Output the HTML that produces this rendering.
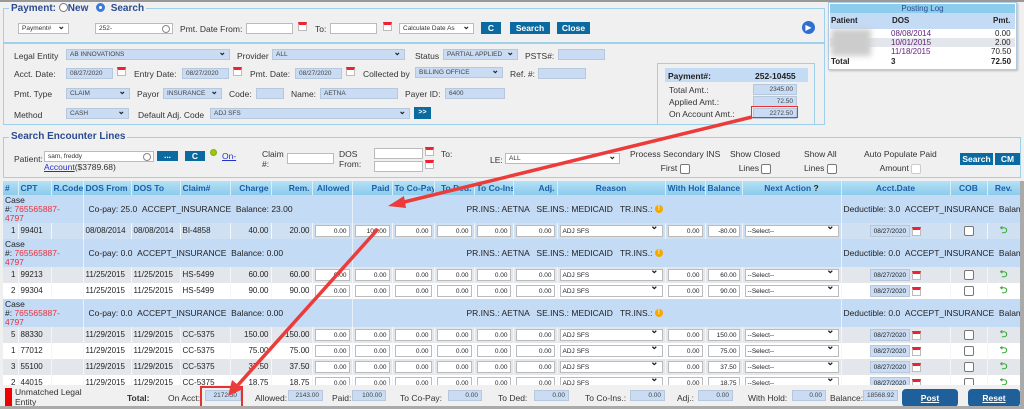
<!DOCTYPE html>
<html><head><meta charset="utf-8"><style>
*{box-sizing:border-box;margin:0;padding:0}
body{width:1024px;height:409px;overflow:hidden;background:#f0f0f0;font-family:"Liberation Sans",Arial,sans-serif;font-size:8px;color:#333;position:relative}
.a{position:absolute;white-space:nowrap}
.lb{font-size:8.5px;color:#333}
.in{position:absolute;background:#c9dcf3;border:1px solid #b8c8dc;height:11px;font-size:6.5px;padding:1px 3px;color:#444;white-space:nowrap}
.wi{position:absolute;background:#fff;border:1px solid #bbb;height:11px;font-size:6.5px;padding:1px 3px;white-space:nowrap}
.sel::after{content:"⌄";position:absolute;right:3px;top:-3px;font-size:9px;color:#222;font-weight:bold}
.btn{position:absolute;background:#0b6aa0;color:#fff;font-weight:bold;font-size:8.5px;text-align:center;height:12px;line-height:12px}
.cal{position:absolute;width:9px;height:9px;background:#fff;border:1px solid #bbb;border-top:3px solid #e23}
.leg{position:absolute;color:#2b4b90;font-weight:bold;font-size:10px;background:#f0f0f0;padding:0 2px}
.fs{position:absolute;border:1px solid #9fd0ea}
table{border-collapse:collapse;table-layout:fixed;width:1017px}
td{font-size:8px;white-space:nowrap;padding:0 2px;border-right:1px solid #f4f6f9;overflow:hidden;color:#222}
th{font-size:8.5px;color:#1a5fa8;background:linear-gradient(#b5e0f5,#8ccbec);height:14px;border-right:1px solid #d8eef9;text-align:right;padding:0 2px;white-space:nowrap;overflow:hidden}
.r{text-align:right}
.c{text-align:center}
.case td{background:#c4dbf6;height:28px;font-size:8.5px;border-right:1px solid #e8f0fa;line-height:9px}
.cn{color:#e8303a}
.ti{display:block;background:#fff;border:1px solid #bbb;height:12px;font-size:6.5px;text-align:right;padding:1px 2px}
.ts{display:block;background:#fff;border:1px solid #bbb;height:12px;font-size:6.5px;padding:1px 2px;position:relative}
.ts::after{content:"⌄";position:absolute;right:3px;top:-4px;font-size:10px;font-weight:bold}
.dt{display:inline-block;background:#c9dcf3;border:1px solid #b8c8dc;height:12px;font-size:6.5px;padding:1px 2px;width:40px;vertical-align:middle}
.ck{display:inline-block;width:10px;height:10px;border:1px solid #777;border-radius:2px;background:#fff;vertical-align:middle}
.rv{color:#3cac3c;font-weight:bold;font-size:10px;line-height:10px}
.dr td{height:16px;line-height:10px}
.g td{background:#e3e6ea}
.w td{background:#fff}
.b td{background:#cfe0f3}
.ex{display:inline-block;width:8px;height:8px;border-radius:50%;background:#f5a800;color:#fff;font-size:6px;text-align:center;line-height:8px;font-weight:bold;vertical-align:middle}
.tc{display:inline-block;width:9px;height:9px;background:#fff;border:1px solid #bbb;border-top:3px solid #e23;vertical-align:middle}
</style></head><body>
<div class="a" style="left:0;top:0;width:1024px;height:2px;background:#999"></div>
<div class="fs" style="left:3px;top:8px;width:822px;height:35px"></div>
<div class="leg" style="left:9px;top:3px">Payment: <span style="display:inline-block;width:9px;height:9px;border:1px solid #777;border-radius:50%;background:#fff;vertical-align:-1px"></span>New <span style="display:inline-block;width:9px;height:9px;border:3px solid #3a7ad8;border-radius:50%;background:#fff;vertical-align:-1px;margin-left:5px"></span> &nbsp;Search</div>
<div class="wi sel" style="left:18px;top:23px;width:51px">Payment#</div>
<div class="wi" style="left:95px;top:23px;width:78px">252-</div>
<div class="a" style="left:162px;top:25px;width:8px;height:8px;border:1px solid #888;border-radius:50%"></div>
<div class="a lb" style="left:180px;top:24px">Pmt. Date From:</div>
<div class="wi" style="left:246px;top:23px;width:47px"></div><div class="cal" style="left:298px;top:22px"></div>
<div class="a lb" style="left:315px;top:24px">To:</div>
<div class="wi" style="left:330px;top:23px;width:47px"></div><div class="cal" style="left:383px;top:22px"></div>
<div class="wi sel" style="left:399px;top:23px;width:75px">Calculate Date As</div>
<div class="btn" style="left:481px;top:22px;width:20px">C</div>
<div class="btn" style="left:510px;top:22px;width:40px">Search</div>
<div class="btn" style="left:557px;top:22px;width:33px">Close</div>
<div class="a" style="left:802px;top:21px;width:13px;height:13px;border-radius:50%;background:#2f6fd0;color:#fff;font-size:8px;text-align:center;line-height:13px">▶</div>
<div class="fs" style="left:3px;top:43px;width:822px;height:82px"></div>
<div class="a lb" style="left:14px;top:51px">Legal Entity</div>
<div class="in sel" style="left:66px;top:49px;width:164px">AB INNOVATIONS</div>
<div class="a lb" style="left:237px;top:51px">Provider</div>
<div class="in sel" style="left:272px;top:49px;width:133px">ALL</div>
<div class="a lb" style="left:415px;top:51px">Status</div>
<div class="in sel" style="left:443px;top:49px;width:75px">PARTIAL APPLIED</div>
<div class="a lb" style="left:525px;top:51px">PSTS#:</div>
<div class="in" style="left:558px;top:49px;width:47px"></div>
<div class="a lb" style="left:14px;top:69px">Acct. Date:</div>
<div class="in" style="left:66px;top:68px;width:47px">08/27/2020</div><div class="cal" style="left:117px;top:67px"></div>
<div class="a lb" style="left:134px;top:69px">Entry Date:</div>
<div class="in" style="left:182px;top:68px;width:47px">08/27/2020</div><div class="cal" style="left:233px;top:67px"></div>
<div class="a lb" style="left:250px;top:69px">Pmt. Date:</div>
<div class="in" style="left:295px;top:68px;width:47px">08/27/2020</div><div class="cal" style="left:346px;top:67px"></div>
<div class="a lb" style="left:363px;top:69px">Collected by</div>
<div class="in sel" style="left:415px;top:67px;width:88px">BILLING OFFICE</div>
<div class="a lb" style="left:510px;top:69px">Ref. #:</div>
<div class="in" style="left:538px;top:68px;width:48px"></div>
<div class="a lb" style="left:14px;top:89px">Pmt. Type</div>
<div class="in sel" style="left:66px;top:88px;width:64px">CLAIM</div>
<div class="a lb" style="left:137px;top:89px">Payor</div>
<div class="in sel" style="left:163px;top:88px;width:59px">INSURANCE</div>
<div class="a lb" style="left:229px;top:89px">Code:</div>
<div class="in" style="left:256px;top:88px;width:28px"></div>
<div class="a lb" style="left:291px;top:89px">Name:</div>
<div class="in" style="left:320px;top:88px;width:78px">AETNA</div>
<div class="a lb" style="left:405px;top:89px">Payer ID:</div>
<div class="in" style="left:445px;top:88px;width:60px">6400</div>
<div class="a lb" style="left:14px;top:110px">Method</div>
<div class="in sel" style="left:66px;top:108px;width:63px">CASH</div>
<div class="a lb" style="left:138px;top:110px">Default Adj. Code</div>
<div class="in sel" style="left:210px;top:108px;width:200px">ADJ SFS</div>
<div class="btn" style="left:414px;top:107px;width:17px;font-size:7px">&gt;&gt;</div>
<div class="a" style="left:657px;top:63px;width:158px;height:62px;border:1px solid #9fd0ea"></div>
<div class="a" style="left:665px;top:68px;width:143px;height:14px;background:#c4dbf6"></div>
<div class="a" style="left:668px;top:71px;font-weight:bold;font-size:8.5px;color:#222">Payment#:</div>
<div class="a" style="left:755px;top:71px;font-weight:bold;font-size:8.5px;color:#222">252-10455</div>
<div class="a lb" style="left:669px;top:85px">Total Amt.:</div>
<div class="in" style="left:753px;top:84px;width:44px;text-align:right">2345.00</div>
<div class="a lb" style="left:669px;top:97px">Applied Amt.:</div>
<div class="in" style="left:753px;top:96px;width:44px;text-align:right">72.50</div>
<div class="a lb" style="left:669px;top:109px">On Account Amt.:</div>
<div class="in" style="left:753px;top:108px;width:44px;text-align:right">2272.50</div>
<div class="a" style="left:751px;top:106px;width:47px;height:12px;border:1.5px solid #e83030"></div>
<div class="a" style="left:828px;top:2px;width:189px;height:68px;border:1px solid #b0c8e0;background:#fff;box-shadow:1px 1px 2px #bbb"></div>
<div class="a" style="left:830px;top:4px;width:185px;height:9px;background:#8cccec;color:#2b4b90;font-size:8px;text-align:center;line-height:9px">Posting Log</div>
<div class="a" style="left:830px;top:13px;width:185px;height:16px;background:#c4dbf6"></div>
<div class="a" style="left:831px;top:16px;font-weight:bold;color:#222">Patient</div>
<div class="a" style="left:892px;top:16px;font-weight:bold;color:#222">DOS</div>
<div class="a" style="left:993px;top:16px;font-weight:bold;color:#222">Pmt.</div>
<div class="a" style="left:830px;top:38px;width:185px;height:9px;background:#e3e6ea"></div>
<div class="a" style="left:831px;top:29px;width:40px;height:27px;background:#ccc;filter:blur(3px)"></div>
<div class="a" style="left:891px;top:29px;color:#63207a">08/08/2014</div><div class="a" style="left:995px;top:29px;color:#222">0.00</div>
<div class="a" style="left:891px;top:38px;color:#63207a">10/01/2015</div><div class="a" style="left:995px;top:38px;color:#222">2.00</div>
<div class="a" style="left:891px;top:47px;color:#63207a">11/18/2015</div><div class="a" style="left:991px;top:47px;color:#222">70.50</div>
<div class="a" style="left:831px;top:57px;font-weight:bold;color:#222">Total</div>
<div class="a" style="left:891px;top:57px;font-weight:bold;color:#222">3</div>
<div class="a" style="left:991px;top:57px;font-weight:bold;color:#222">72.50</div>
<div class="fs" style="left:3px;top:137px;width:1018px;height:41px"></div>
<div class="leg" style="left:9px;top:131px">Search Encounter Lines</div>
<div class="a lb" style="left:14px;top:154px">Patient:</div>
<div class="wi" style="left:44px;top:151px;width:110px">sam, freddy</div>
<div class="a" style="left:143px;top:153px;width:8px;height:8px;border:1px solid #888;border-radius:50%"></div>
<div class="btn" style="left:157px;top:151px;width:21px;height:10px;line-height:8px">...</div>
<div class="btn" style="left:185px;top:151px;width:20px;height:10px;line-height:10px">C</div>
<div class="a" style="left:210px;top:149px;width:7px;height:7px;border-radius:50%;background:#9c0;border:1px solid #8a2"></div>
<div class="a" style="left:222px;top:151px;color:#2233cc;text-decoration:underline;font-size:8.5px">On-</div>
<div class="a" style="left:44px;top:162px;font-size:8.5px"><span style="color:#2233cc;text-decoration:underline">Account</span>($3789.68)</div>
<div class="a lb" style="left:262px;top:149px;line-height:10px">Claim<br>#:</div>
<div class="wi" style="left:287px;top:153px;width:47px"></div>
<div class="a lb" style="left:339px;top:149px;line-height:10px">DOS<br>From:</div>
<div class="wi" style="left:374px;top:148px;width:49px"></div><div class="cal" style="left:425px;top:147px"></div>
<div class="wi" style="left:374px;top:161px;width:49px"></div><div class="cal" style="left:425px;top:160px"></div>
<div class="a lb" style="left:441px;top:149px">To:</div>
<div class="a lb" style="left:490px;top:155px">LE:</div>
<div class="wi sel" style="left:505px;top:153px;width:115px">ALL</div>
<div class="a lb" style="left:630px;top:147px;text-align:center;line-height:14px">Process Secondary INS<br>First <span class="ck"></span></div>
<div class="a lb" style="left:730px;top:147px;text-align:center;line-height:14px">Show Closed<br>Lines <span class="ck"></span></div>
<div class="a lb" style="left:804px;top:147px;text-align:center;line-height:14px">Show All<br>Lines <span class="ck"></span></div>
<div class="a lb" style="left:864px;top:147px;text-align:center;line-height:14px">Auto Populate Paid<br>Amount <span class="ck" style="border-color:#ccc"></span></div>
<div class="btn" style="left:960px;top:153px;width:33px">Search</div>
<div class="btn" style="left:995px;top:153px;width:25px">CM</div>
<div class="a" style="left:3px;top:181px;width:1017px;height:204px;overflow:hidden;background:#fff">
<table>
<colgroup><col style="width:15px"><col style="width:33px"><col style="width:32px"><col style="width:48px"><col style="width:49px"><col style="width:50px"><col style="width:41px"><col style="width:41px"><col style="width:40px"><col style="width:40px"><col style="width:42px"><col style="width:40px"><col style="width:39px"><col style="width:44px"><col style="width:108px"><col style="width:40px"><col style="width:37px"><col style="width:99px"><col style="width:109px"><col style="width:37px"><col style="width:33px"></colgroup>
<tr><th style="text-align:left">#</th><th style="text-align:left">CPT</th><th>R.Code</th><th style="text-align:left">DOS From</th><th style="text-align:left">DOS To</th><th style="text-align:left">Claim#</th><th>Charge</th><th>Rem.</th><th>Allowed</th><th>Paid</th><th>To Co-Pay</th><th>To Ded.</th><th>To Co-Ins.</th><th>Adj.</th><th class="c">Reason</th><th>With Hold</th><th>Balance</th><th class="c">Next Action <span style="color:#222">?</span></th><th class="c">Acct.Date</th><th class="c">COB</th><th class="c">Rev.</th></tr>
<tr class="case"><td colspan="3">Case<br>#: <span class="cn">765565887-</span><br><span class="cn">4797</span></td><td colspan="6" style="padding-left:5px">Co-pay: 25.0 &nbsp;ACCEPT_INSURANCE &nbsp;Balance: 23.00</td><td colspan="9" style="padding-left:114px">PR.INS.: AETNA &nbsp; SE.INS.: MEDICAID &nbsp; TR.INS.: <span class="ex">!</span></td><td colspan="3">Deductible: 3.0 &nbsp;ACCEPT_INSURANCE &nbsp;Balance</td></tr>
<tr class="dr b"><td class="r">1</td><td>99401</td><td></td><td>08/08/2014</td><td>08/08/2014</td><td>BI-4858</td><td class="r">40.00</td><td class="r">20.00</td><td><span class="ti">0.00</span></td><td><span class="ti">100.00</span></td><td><span class="ti">0.00</span></td><td><span class="ti">0.00</span></td><td><span class="ti">0.00</span></td><td><span class="ti">0.00</span></td><td><span class="ts">ADJ SFS</span></td><td><span class="ti">0.00</span></td><td><span class="ti">-80.00</span></td><td><span class="ts">--Select--</span></td><td class="c"><span class="dt">08/27/2020</span> <span class="tc"></span></td><td class="c"><span class="ck"></span></td><td class="c rv">⮌</td></tr>
<tr class="case"><td colspan="3">Case<br>#: <span class="cn">765565887-</span><br><span class="cn">4797</span></td><td colspan="6" style="padding-left:5px">Co-pay: 0.0 &nbsp;ACCEPT_INSURANCE &nbsp;Balance: 0.00</td><td colspan="9" style="padding-left:114px">PR.INS.: AETNA &nbsp; SE.INS.: MEDICAID &nbsp; TR.INS.: <span class="ex">!</span></td><td colspan="3">Deductible: 0.0 &nbsp;ACCEPT_INSURANCE &nbsp;Balance</td></tr>
<tr class="dr g"><td class="r">1</td><td>99213</td><td></td><td>11/25/2015</td><td>11/25/2015</td><td>HS-5499</td><td class="r">60.00</td><td class="r">60.00</td><td><span class="ti">0.00</span></td><td><span class="ti">0.00</span></td><td><span class="ti">0.00</span></td><td><span class="ti">0.00</span></td><td><span class="ti">0.00</span></td><td><span class="ti">0.00</span></td><td><span class="ts">ADJ SFS</span></td><td><span class="ti">0.00</span></td><td><span class="ti">60.00</span></td><td><span class="ts">--Select--</span></td><td class="c"><span class="dt">08/27/2020</span> <span class="tc"></span></td><td class="c"><span class="ck"></span></td><td class="c rv">⮌</td></tr>
<tr class="dr w"><td class="r">2</td><td>99304</td><td></td><td>11/25/2015</td><td>11/25/2015</td><td>HS-5499</td><td class="r">90.00</td><td class="r">90.00</td><td><span class="ti">0.00</span></td><td><span class="ti">0.00</span></td><td><span class="ti">0.00</span></td><td><span class="ti">0.00</span></td><td><span class="ti">0.00</span></td><td><span class="ti">0.00</span></td><td><span class="ts">ADJ SFS</span></td><td><span class="ti">0.00</span></td><td><span class="ti">90.00</span></td><td><span class="ts">--Select--</span></td><td class="c"><span class="dt">08/27/2020</span> <span class="tc"></span></td><td class="c"><span class="ck"></span></td><td class="c rv">⮌</td></tr>
<tr class="case"><td colspan="3">Case<br>#: <span class="cn">765565887-</span><br><span class="cn">4797</span></td><td colspan="6" style="padding-left:5px">Co-pay: 0.0 &nbsp;ACCEPT_INSURANCE &nbsp;Balance: 0.00</td><td colspan="9" style="padding-left:114px">PR.INS.: AETNA &nbsp; SE.INS.: MEDICAID &nbsp; TR.INS.: <span class="ex">!</span></td><td colspan="3">Deductible: 0.0 &nbsp;ACCEPT_INSURANCE &nbsp;Balance</td></tr>
<tr class="dr g"><td class="r">5</td><td>88330</td><td></td><td>11/29/2015</td><td>11/29/2015</td><td>CC-5375</td><td class="r">150.00</td><td class="r">150.00</td><td><span class="ti">0.00</span></td><td><span class="ti">0.00</span></td><td><span class="ti">0.00</span></td><td><span class="ti">0.00</span></td><td><span class="ti">0.00</span></td><td><span class="ti">0.00</span></td><td><span class="ts">ADJ SFS</span></td><td><span class="ti">0.00</span></td><td><span class="ti">150.00</span></td><td><span class="ts">--Select--</span></td><td class="c"><span class="dt">08/27/2020</span> <span class="tc"></span></td><td class="c"><span class="ck"></span></td><td class="c rv">⮌</td></tr>
<tr class="dr w"><td class="r">1</td><td>77012</td><td></td><td>11/29/2015</td><td>11/29/2015</td><td>CC-5375</td><td class="r">75.00</td><td class="r">75.00</td><td><span class="ti">0.00</span></td><td><span class="ti">0.00</span></td><td><span class="ti">0.00</span></td><td><span class="ti">0.00</span></td><td><span class="ti">0.00</span></td><td><span class="ti">0.00</span></td><td><span class="ts">ADJ SFS</span></td><td><span class="ti">0.00</span></td><td><span class="ti">75.00</span></td><td><span class="ts">--Select--</span></td><td class="c"><span class="dt">08/27/2020</span> <span class="tc"></span></td><td class="c"><span class="ck"></span></td><td class="c rv">⮌</td></tr>
<tr class="dr g"><td class="r">3</td><td>55100</td><td></td><td>11/29/2015</td><td>11/29/2015</td><td>CC-5375</td><td class="r">37.50</td><td class="r">37.50</td><td><span class="ti">0.00</span></td><td><span class="ti">0.00</span></td><td><span class="ti">0.00</span></td><td><span class="ti">0.00</span></td><td><span class="ti">0.00</span></td><td><span class="ti">0.00</span></td><td><span class="ts">ADJ SFS</span></td><td><span class="ti">0.00</span></td><td><span class="ti">37.50</span></td><td><span class="ts">--Select--</span></td><td class="c"><span class="dt">08/27/2020</span> <span class="tc"></span></td><td class="c"><span class="ck"></span></td><td class="c rv">⮌</td></tr>
<tr class="dr w"><td class="r">2</td><td>44015</td><td></td><td>11/29/2015</td><td>11/29/2015</td><td>CC-5375</td><td class="r">18.75</td><td class="r">18.75</td><td><span class="ti">0.00</span></td><td><span class="ti">0.00</span></td><td><span class="ti">0.00</span></td><td><span class="ti">0.00</span></td><td><span class="ti">0.00</span></td><td><span class="ti">0.00</span></td><td><span class="ts">ADJ SFS</span></td><td><span class="ti">0.00</span></td><td><span class="ti">18.75</span></td><td><span class="ts">--Select--</span></td><td class="c"><span class="dt">08/27/2020</span> <span class="tc"></span></td><td class="c"><span class="ck"></span></td><td class="c rv">⮌</td></tr>
</table></div>
<div class="a" style="left:1020px;top:181px;width:4px;height:228px;background:#aaa"></div>
<div class="a" style="left:5px;top:388px;width:7px;height:19px;background:#e00"></div>
<div class="a lb" style="left:15px;top:387px;line-height:10px">Unmatched Legal<br>Entity</div>
<div class="a lb" style="left:127px;top:393px;font-weight:bold">Total:</div>
<div class="a lb" style="left:168px;top:393px">On Acct:</div><div class="in" style="left:205px;top:390px;width:36px;text-align:right">2172.50</div>
<div class="a" style="left:200px;top:386px;width:43px;height:23px;border:2px solid #e83030"></div>
<div class="a lb" style="left:255px;top:393px">Allowed:</div><div class="in" style="left:288px;top:390px;width:35px;text-align:right">2143.00</div>
<div class="a lb" style="left:332px;top:393px">Paid:</div><div class="in" style="left:352px;top:390px;width:34px;text-align:right">100.00</div>
<div class="a lb" style="left:400px;top:393px">To Co-Pay:</div><div class="in" style="left:448px;top:390px;width:34px;text-align:right">0.00</div>
<div class="a lb" style="left:498px;top:393px">To Ded:</div><div class="in" style="left:534px;top:390px;width:35px;text-align:right">0.00</div>
<div class="a lb" style="left:585px;top:393px">To Co-Ins.:</div><div class="in" style="left:630px;top:390px;width:35px;text-align:right">0.00</div>
<div class="a lb" style="left:677px;top:393px">Adj.:</div><div class="in" style="left:698px;top:390px;width:35px;text-align:right">0.00</div>
<div class="a lb" style="left:748px;top:393px">With Hold:</div><div class="in" style="left:792px;top:390px;width:34px;text-align:right">0.00</div>
<div class="a lb" style="left:830px;top:393px">Balance:</div><div class="in" style="left:863px;top:390px;width:35px;text-align:right">18568.92</div>
<div class="btn" style="left:902px;top:389px;width:56px;height:18px;line-height:18px;border-radius:4px;background:#1f5f9a;text-decoration:underline">Post</div>
<div class="btn" style="left:968px;top:389px;width:52px;height:18px;line-height:18px;border-radius:4px;background:#1f5f9a;text-decoration:underline">Reset</div>
<div class="a" style="left:0;top:406px;width:1024px;height:3px;background:#aaa"></div>
<svg class="a" style="left:0;top:0" width="1024" height="409">
<line x1="752" y1="117" x2="400" y2="203" stroke="#ec3b3b" stroke-width="3.5"/>
<polygon points="388,206 404,196 406,208" fill="#ec3b3b"/>
<line x1="378" y1="229" x2="238" y2="385" stroke="#ec3b3b" stroke-width="3.5"/>
<polygon points="228,396 232,380 243,389" fill="#ec3b3b"/>
</svg>
</body></html>
